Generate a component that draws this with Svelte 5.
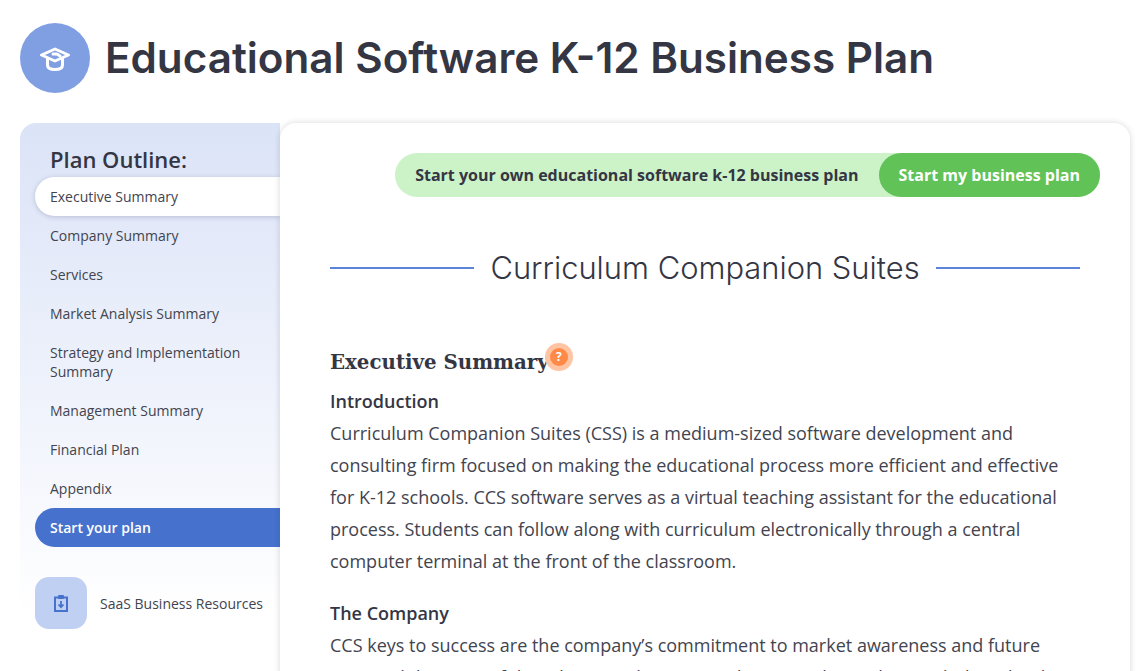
<script>
    const outline = [
        { label: "Executive Summary", active: true },
        { label: "Company Summary" },
        { label: "Services" },
        { label: "Market Analysis Summary" },
        { label: "Strategy and Implementation Summary" },
        { label: "Management Summary" },
        { label: "Financial Plan" },
        { label: "Appendix" },
        { label: "Start your plan", cta: true },
    ];
</script>

<div class="page">
    <header class="top">
        <div class="logo">
            <svg width="32" height="32" viewBox="0 0 32 32" fill="none" stroke="#fff" stroke-width="3" stroke-linejoin="round" stroke-linecap="round">
                <path d="M16 7 L29.5 13 L16 19 L2.5 13 Z" />
                <path d="M8.5 17 V23 C8.5 26 11.5 27.5 16 27.5 C20.5 27.5 23.5 26 23.5 23 V17" />
                <path d="M14 12 H18 L21 14" />
            </svg>
        </div>
        <h1>Educational Software K-12 Business Plan</h1>
    </header>

    <div class="body">
        <aside class="side">
            <h2>Plan Outline:</h2>
            <ul>
                {#each outline as item}
                    <li class:active={item.active} class:cta={item.cta}>{item.label}</li>
                {/each}
            </ul>
            <div class="res">
                <div class="res-icon">
                    <svg width="16" height="18" viewBox="0 0 16 18" fill="none">
                        <path d="M2 3.5 H14 V17 H2 Z" stroke="#4672cd" stroke-width="2" />
                        <rect x="5" y="1" width="6" height="4" rx="1" fill="#4672cd" />
                        <path d="M8 7 V12 M5.5 10.5 L8 13.2 L10.5 10.5" stroke="#4672cd" stroke-width="1.8" />
                    </svg>
                </div>
                <span>SaaS Business Resources</span>
            </div>
        </aside>

        <main class="card">
            <div class="cta-row">
                <div class="pill">
                    <span class="pill-text">Start your own educational software k-12 business plan</span>
                    <span class="pill-btn">Start my business plan</span>
                </div>
            </div>

            <div class="title-row">
                <span class="rule"></span>
                <h2>Curriculum Companion Suites</h2>
                <span class="rule"></span>
            </div>

            <div class="sec-head">
                <h3>Executive Summary</h3>
                <span class="help">?</span>
            </div>

            <h4>Introduction</h4>
            <p>Curriculum Companion Suites (CSS) is a medium-sized software development and consulting firm focused on making the educational process more efficient and effective for K-12 schools. CCS software serves as a virtual teaching assistant for the educational process. Students can follow along with curriculum electronically through a central computer terminal at the front of the classroom.</p>

            <h4>The Company</h4>
            <p>CCS keys to success are the company’s commitment to market awareness and future potential direction of the educational system and strong relationships with the schools and vendors in the market.</p>
        </main>
    </div>
</div>

<style>
    :global(body) {
        margin: 0;
        background: #fff;
        overflow: hidden;
    }

    .page {
        height: 671px;
        overflow: hidden;
        font-family: "Open Sans", sans-serif;
        color: #343644;
    }

    .top {
        display: flex;
        align-items: center;
        gap: 15px;
        padding: 23px 20px 30px;
    }

    .logo {
        width: 70px;
        height: 70px;
        border-radius: 50%;
        background: #7f9fe2;
        display: grid;
        place-items: center;
    }

    h1 {
        margin: 0;
        font-family: Inter, sans-serif;
        font-size: 42.2px;
        font-weight: 600;
        line-height: 70px;
    }

    .body {
        display: flex;
        margin: 0 18px 0 20px;
    }

    .side {
        width: 260px;
        flex: none;
        height: 548px;
        padding: 20px 0 0 15px;
        box-sizing: border-box;
        border-radius: 16px 0 0 0;
        background: linear-gradient(#dbe3f7, #fff 90%);
    }

    .side h2 {
        margin: 0 0 2px 15px;
        font-size: 22px;
        font-weight: 600;
        line-height: 32px;
    }

    ul {
        list-style: none;
        margin: 0;
        padding: 0;
    }

    li {
        padding: 10px 15px;
        font-size: 14px;
        line-height: 19px;
        border-radius: 20px 0 0 20px;
        color: #42444f;
    }

    li.active {
        background: #fff;
        box-shadow: 0 1px 5px rgba(60, 70, 110, 0.25);
    }

    li.cta {
        background: #4672cd;
        color: #fff;
        font-weight: 600;
    }

    .res {
        display: flex;
        align-items: center;
        gap: 13px;
        margin-top: 30px;
        font-size: 14px;
        color: #42444f;
    }

    .res-icon {
        width: 52px;
        height: 52px;
        border-radius: 14px;
        background: #c0d0f2;
        display: grid;
        place-items: center;
    }

    .card {
        flex: 1;
        height: 560px;
        padding: 30px 30px 0 50px;
        background: #fff;
        border-radius: 16px 16px 0 0;
        box-shadow: 0 0 6px rgba(40, 40, 60, 0.18);
    }

    .cta-row {
        display: flex;
        justify-content: flex-end;
    }

    .pill {
        display: flex;
        align-items: center;
        height: 44px;
        border-radius: 22px;
        background: #ccf2c8;
        font-size: 16px;
        font-weight: 700;
    }

    .pill-text {
        padding: 0 20px;
    }

    .pill-btn {
        height: 44px;
        line-height: 44px;
        padding: 0 20px;
        border-radius: 22px;
        background: #60c257;
        color: #fff;
    }

    .title-row {
        display: flex;
        align-items: center;
        gap: 16px;
        margin: 48px 20px 0 0;
    }

    .title-row h2 {
        margin: 0;
        font-family: Inter, sans-serif;
        font-size: 30.9px;
        font-weight: 300;
        line-height: 46px;
        white-space: nowrap;
    }

    .rule {
        flex: 1;
        height: 2px;
        background: #5b83d8;
    }

    .sec-head {
        display: flex;
        align-items: center;
        margin-top: 55px;
        height: 32px;
    }

    h3 {
        margin: 0;
        font-family: "DejaVu Serif", serif;
        font-size: 19.8px;
        font-weight: 700;
    }

    .help {
        width: 18px;
        height: 18px;
        margin: -10px 0 0 1px;
        border-radius: 50%;
        background: #ff8a47;
        box-shadow: 0 0 0 5px #ffc4a3;
        color: #fff;
        font-size: 12px;
        font-weight: 700;
        line-height: 18px;
        text-align: center;
    }

    h4 {
        margin: 7px 0 0;
        font-size: 18px;
        font-weight: 600;
        line-height: 32px;
    }

    p {
        margin: 0 30px 20px 0;
        font-size: 18px;
        line-height: 32px;
        color: #42444f;
    }
</style>
